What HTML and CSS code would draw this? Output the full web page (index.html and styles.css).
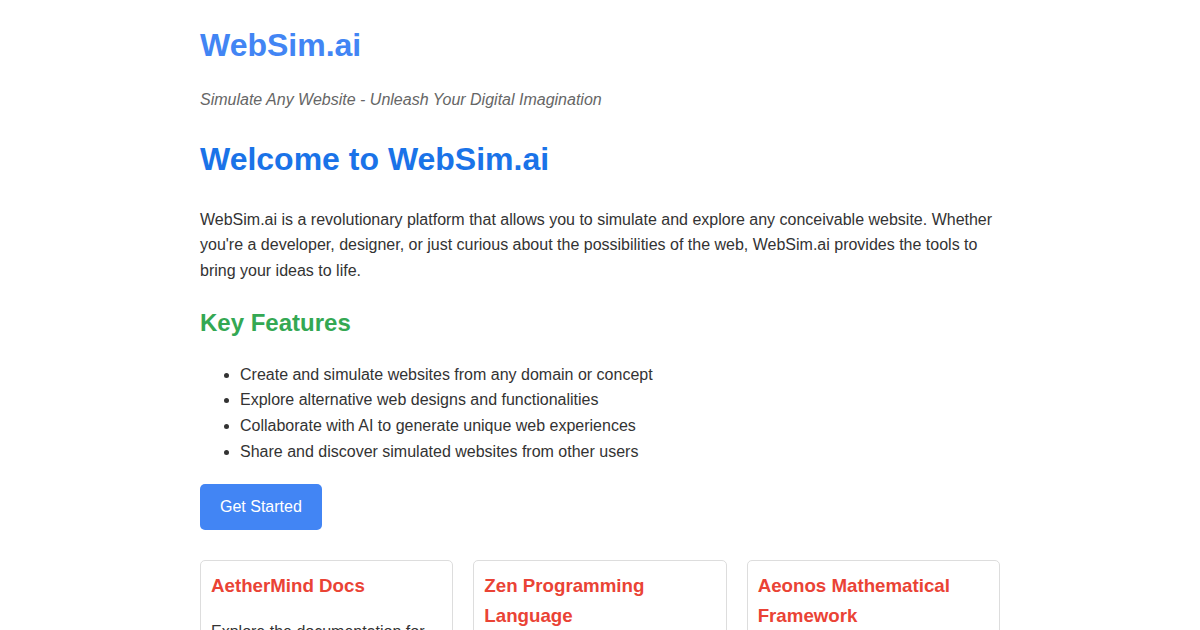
FILE: index.html
```html
<!DOCTYPE html>
<html lang="en">
<head>
<meta charset="utf-8">
<title>WebSim.ai</title>
<link rel="stylesheet" href="styles.css">
</head>
<body>
<div class="container">
  <header class="site-header">
    <div class="logo">WebSim.ai</div>
    <p class="tagline">Simulate Any Website - Unleash Your Digital Imagination</p>
  </header>
  <main>
    <h1 class="title">Welcome to WebSim.ai</h1>
    <p class="intro">WebSim.ai is a revolutionary platform that allows you to simulate and explore any conceivable website. Whether you're a developer, designer, or just curious about the possibilities of the web, WebSim.ai provides the tools to bring your ideas to life.</p>
    <h2 class="section-title">Key Features</h2>
    <ul class="features">
      <li>Create and simulate websites from any domain or concept</li>
      <li>Explore alternative web designs and functionalities</li>
      <li>Collaborate with AI to generate unique web experiences</li>
      <li>Share and discover simulated websites from other users</li>
    </ul>
    <div class="cta"><a class="btn" href="#">Get Started</a></div>
    <div class="cards">
      <div class="card">
        <h3 class="card-title">AetherMind Docs</h3>
        <p class="card-text">Explore the documentation for AetherMind, an advanced AI framework.</p>
      </div>
      <div class="card">
        <h3 class="card-title">Zen Programming Language</h3>
        <p class="card-text">Discover a programming language built around simplicity and calm.</p>
      </div>
      <div class="card">
        <h3 class="card-title">Aeonos Mathematical Framework</h3>
        <p class="card-text">Dive into a framework for exploring timeless mathematical ideas.</p>
      </div>
    </div>
  </main>
</div>
</body>
</html>
```
FILE: styles.css
```css
html, body {
  margin: 0;
  padding: 0;
  background: #fff;
}
body {
  font-family: "Liberation Sans", Arial, sans-serif;
  font-size: 16px;
  line-height: 1.6;
  color: #333;
}
.container {
  max-width: 800px;
  margin: 0 auto;
  padding: 20px;
}
.logo {
  font-size: 32px;
  font-weight: bold;
  color: #4285f4;
}
.tagline {
  font-style: italic;
  color: #666;
  margin: 16px 0;
}
.title {
  font-size: 32px;
  color: #1a73e8;
  margin: 21.44px 0;
}
.intro {
  margin: 16px 0;
}
.section-title {
  font-size: 24px;
  color: #34a853;
  margin: 19.92px 0;
}
.features {
  margin: 16px 0;
  padding-left: 40px;
}
.cta {
  margin: 20px 0 30px;
}
.btn {
  display: inline-block;
  background: #4285f4;
  color: #fff;
  text-decoration: none;
  padding: 10px 20px;
  border-radius: 5px;
}
.cards {
  display: grid;
  grid-template-columns: repeat(3, 1fr);
  gap: 20px;
}
.card {
  border: 1px solid #ddd;
  border-radius: 5px;
  padding: 10px;
}
.card-title {
  font-size: 18.72px;
  color: #ea4335;
  margin: 0 0 18.72px;
}
.card-text {
  margin: 0;
}
```
